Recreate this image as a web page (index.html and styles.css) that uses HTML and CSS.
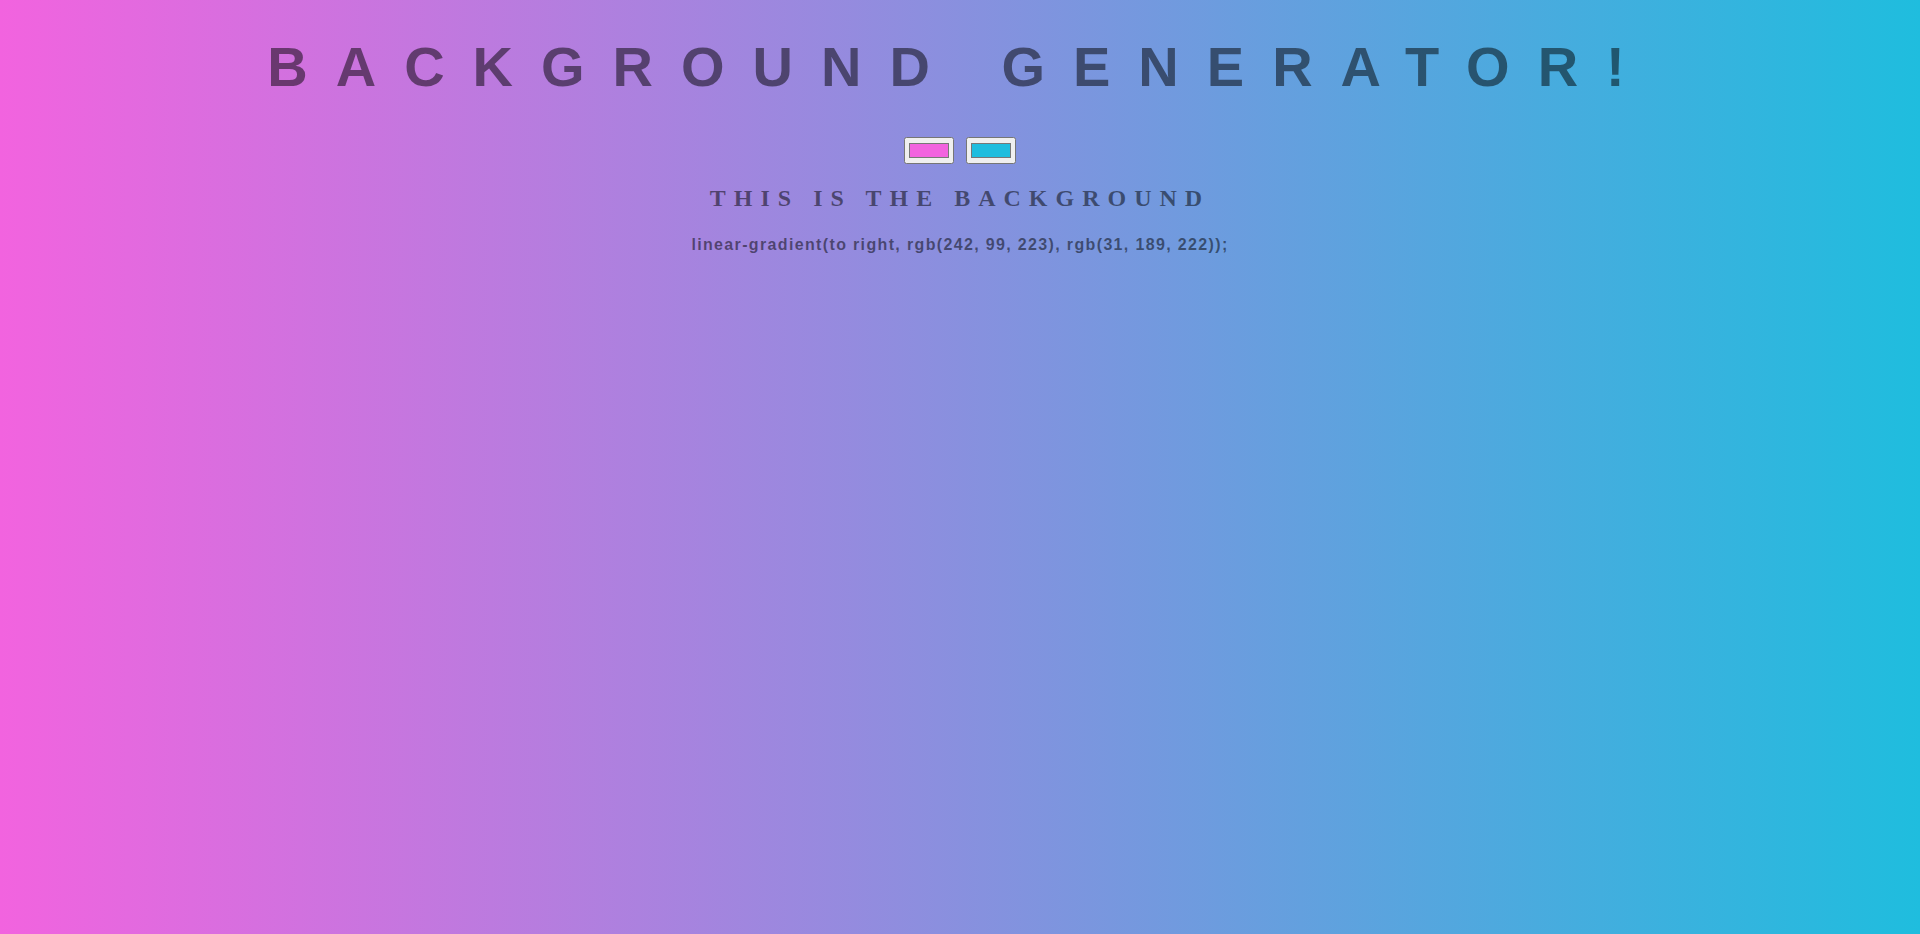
FILE: index.html
```html
<!DOCTYPE html>
<html lang="en">
  <head>
    <meta charset="UTF-8" />
    <meta name="viewport" content="width=device-width, initial-scale=1.0" />
    <title>Background Generator</title>
    <link rel="stylesheet" href="styles.css">
  </head>
  <body id="gradient">
    <h1>Background Generator!</h1>
    <input class="color1" type="color" name="color1" value="#f263df">
    <input class="color2" type="color" name="color2" value="#1fbdde">
    <h2>This is the background</h2>
    <h3 class="css-text">linear-gradient(to right, rgb(242, 99, 223), rgb(31, 189, 222));</h3>
  </body>
</html>
```
FILE: styles.css
```css
html {
  min-height: 100%;
}

body {
  font-family: "Liberation Serif", serif;
  color: rgba(0, 0, 0, 0.5);
  text-align: center;
  text-transform: uppercase;
  letter-spacing: 0.5em;
  background: linear-gradient(to right, rgb(242, 99, 223), rgb(31, 189, 222));
}

h1 {
  font: bold 3.5em "Liberation Sans", Arial, sans-serif;
  color: rgba(0, 0, 0, 0.5);
  letter-spacing: 0.5em;
  width: 100%;
  margin-top: 26px;
}

h2 {
  font-size: 1.5em;
  margin-top: 21px;
}

.css-text {
  font: bold 1em "Liberation Sans", Arial, sans-serif;
  text-transform: none;
  letter-spacing: 1.35px;
  margin-top: 24px;
}
```
